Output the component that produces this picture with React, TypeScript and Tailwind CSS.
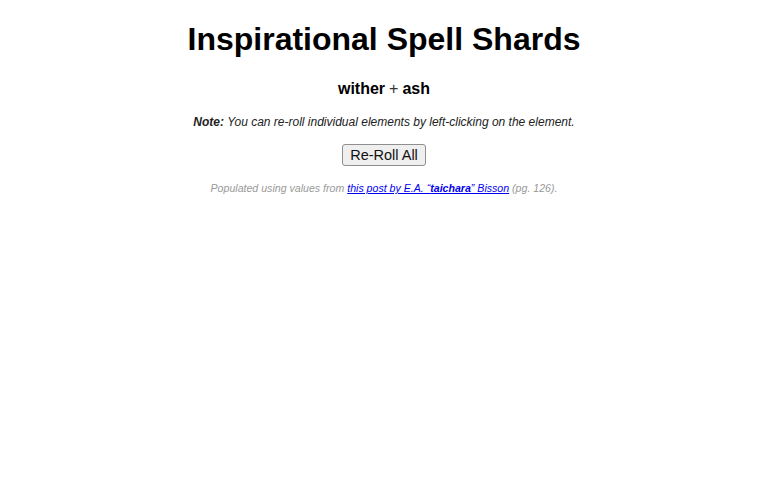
import { useState } from 'react'

const ELEMENTS = ['wither', 'ash', 'frost', 'ember', 'bloom', 'storm', 'shadow', 'light']

const pick = () => ELEMENTS[Math.floor(Math.random() * ELEMENTS.length)]

export default function App() {
  const [pair, setPair] = useState<[string, string]>(['wither', 'ash'])

  const reroll = (i: number) =>
    setPair((p) => (i === 0 ? [pick(), p[1]] : [p[0], pick()]))

  return (
    <div className="flex flex-col items-center text-black" style={{ fontFamily: '"Liberation Sans", Arial, sans-serif' }}>
      <h1 className="mt-[21px] text-[32px] font-bold leading-[37px]">Inspirational Spell Shards</h1>

      <div className="mt-[21px] text-[16px] leading-[20px]">
        <span className="cursor-pointer font-bold" onClick={() => reroll(0)}>
          {pair[0]}
        </span>
        <span className="px-[4px] text-[#333]">+</span>
        <span className="cursor-pointer font-bold" onClick={() => reroll(1)}>
          {pair[1]}
        </span>
      </div>

      <p className="mt-[16px] text-[12px] italic leading-[14px] text-[#222]">
        <b>Note:</b> You can re-roll individual elements by left-clicking on the element.
      </p>

      <button
        className="mt-[15px] rounded-[3px] border border-[#8f8f8f] bg-[#efefef] px-[7px] text-[14.5px] leading-[20px] text-[#111]"
        onClick={() => setPair([pick(), pick()])}
      >
        Re-Roll All
      </button>

      <p className="mt-[16px] text-[10.6px] italic leading-[13px] text-[#999]">
        Populated using values from{' '}
        <a href="#" className="text-[#0000ee] underline">
          this post by E.A. &ldquo;<b>taichara</b>&rdquo; Bisson
        </a>{' '}
        (pg. 126).
      </p>
    </div>
  )
}
